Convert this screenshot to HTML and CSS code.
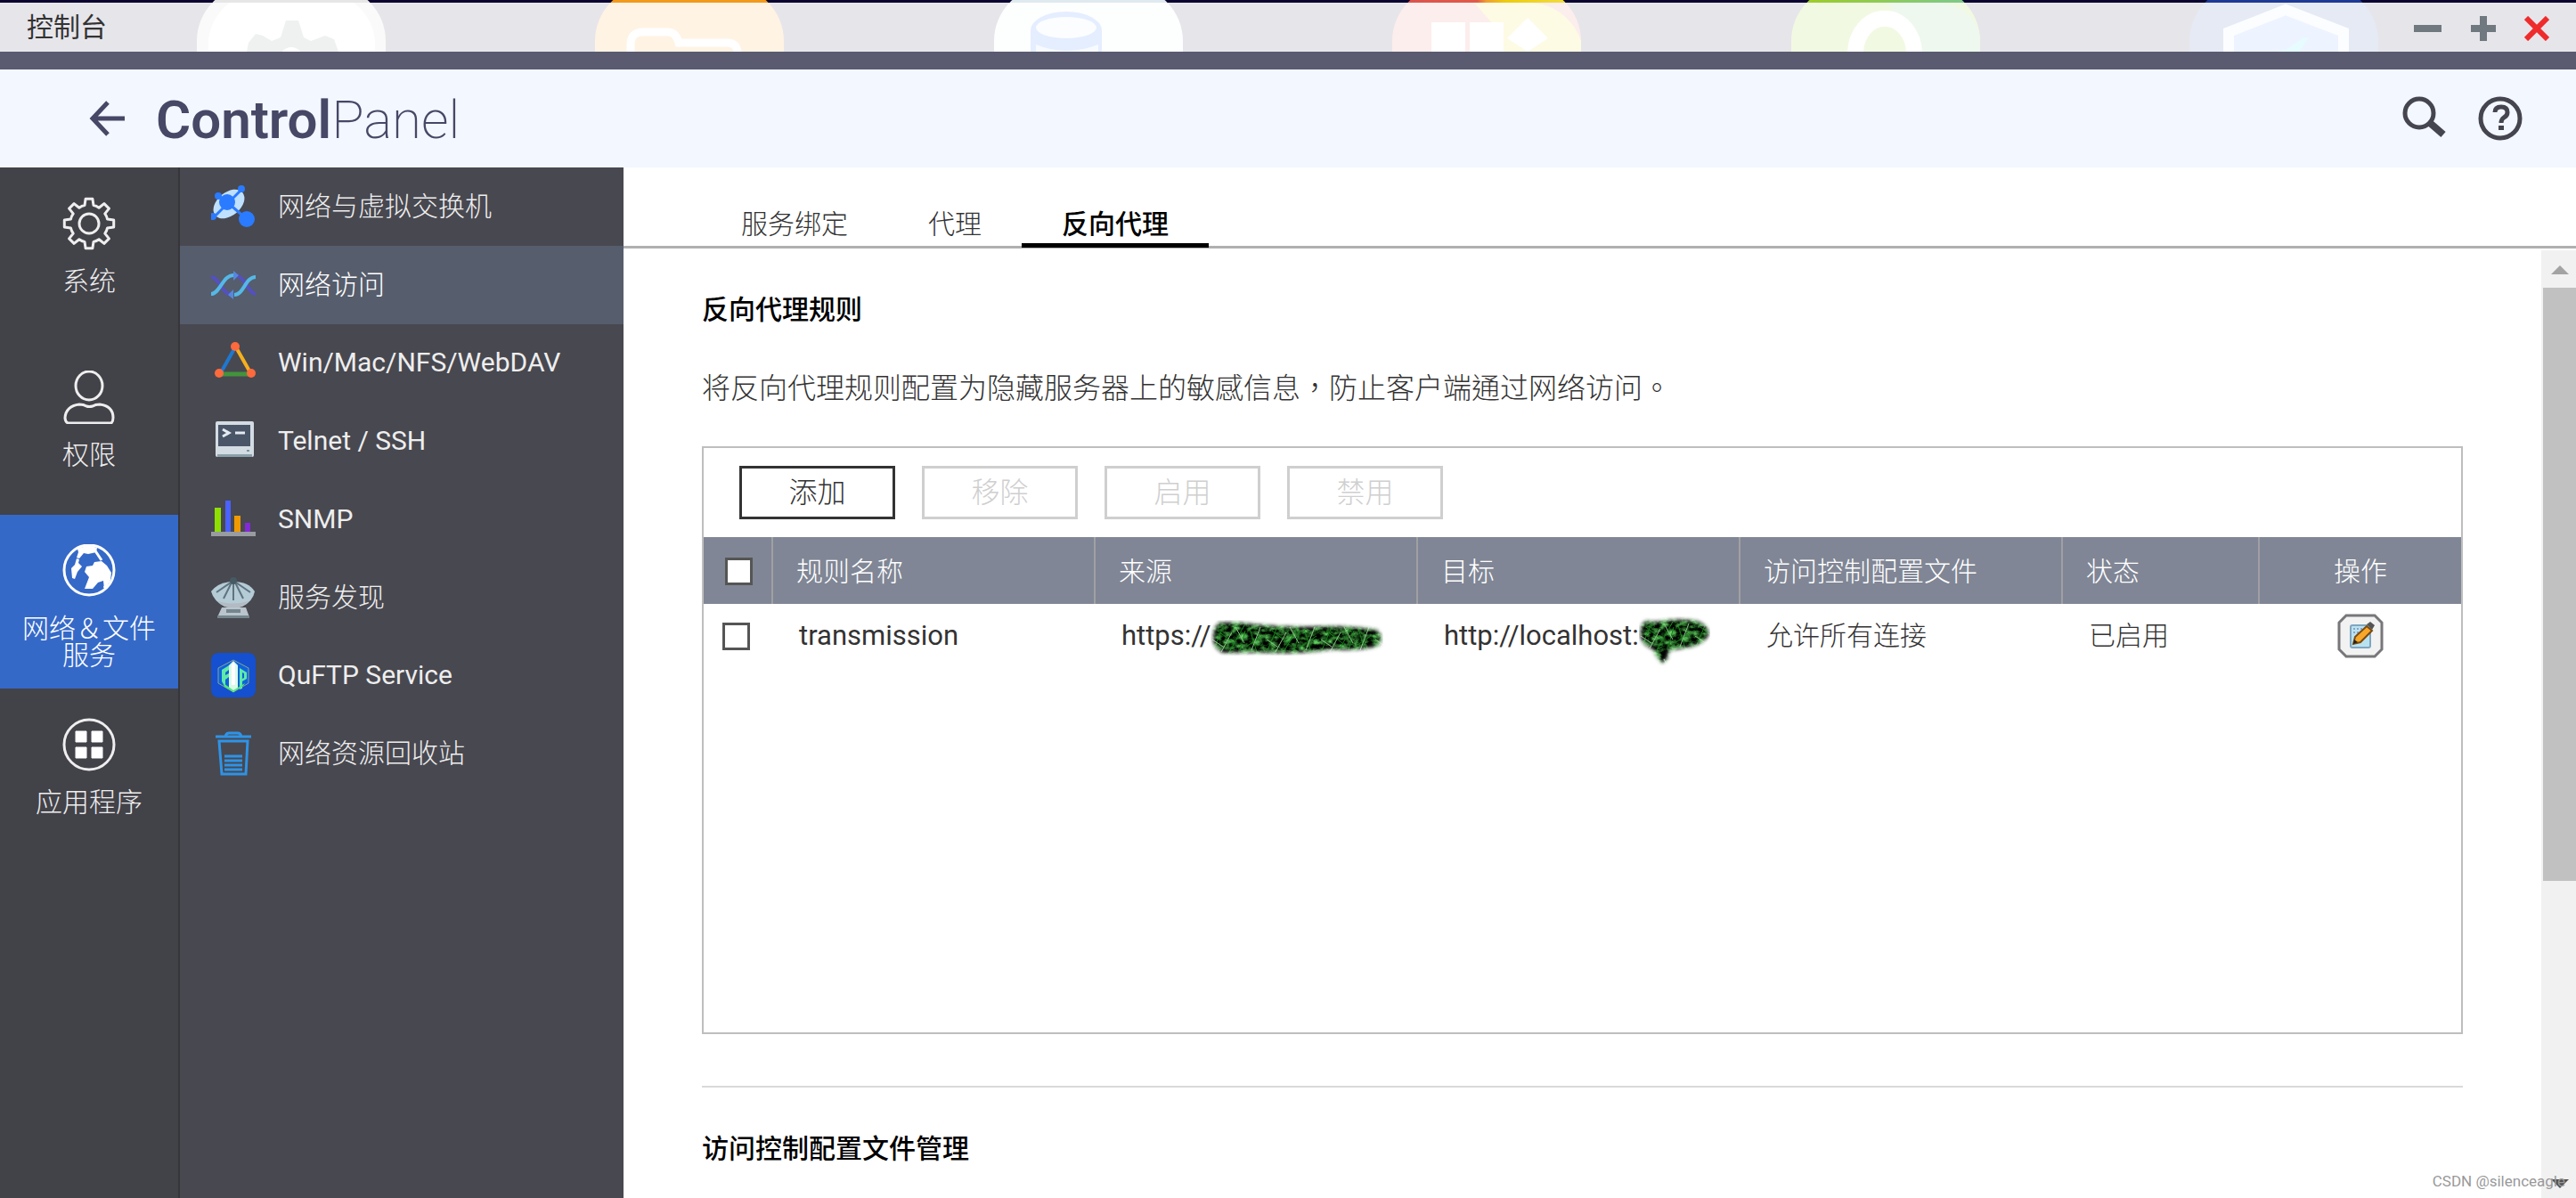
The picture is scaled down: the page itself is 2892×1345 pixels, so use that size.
FILE: index.html
```html
<!DOCTYPE html>
<html lang="zh-CN">
<head>
	<meta charset="UTF-8">
	<meta name="viewport" content="width=device-width, initial-scale=1">
	<title>控制台</title>
	<link rel="stylesheet" href="styles.css">
</head>
<body>
	<header class="titlebar">
		<!-- Desktop shortcuts that shine through the translucent title bar -->
		<svg class="desktop" width="2892" height="58" viewBox="0 0 2892 58" aria-hidden="true">
			<defs>
				<linearGradient id="appCenter"><stop offset="0" stop-color="#d9534f"/><stop offset=".45" stop-color="#e05a4a"/><stop offset=".5" stop-color="#f0a030"/><stop offset=".6" stop-color="#eccb10"/><stop offset="1" stop-color="#f3e04a"/></linearGradient>
				<linearGradient id="help"><stop offset="0" stop-color="#a0cc20"/><stop offset="1" stop-color="#7ac896"/></linearGradient>
			</defs>
			<rect width="2892" height="3" fill="#0b0430"/>
			<g>
				<rect x="221" y="-16" width="212" height="212" rx="62" fill="#e6e6e6"/>
				<rect x="668" y="-16" width="212" height="212" rx="62" fill="#f29a1c"/>
				<rect x="1116" y="-16" width="212" height="212" rx="62" fill="#dfeaf0"/>
				<rect x="1563" y="-16" width="212" height="212" rx="62" fill="url(#appCenter)"/>
				<rect x="2011" y="-16" width="212" height="212" rx="62" fill="url(#help)"/>
				<rect x="2458" y="-16" width="212" height="212" rx="62" fill="#1f3a94"/>
			</g>
			<rect y="3" width="2892" height="55" fill="#e6e5ea"/>
			<clipPath id="bar"><rect y="3" width="2892" height="55"/></clipPath>
			<g clip-path="url(#bar)">
				<rect x="221" y="-16" width="212" height="212" rx="62" fill="#fafafa"/>
				<rect x="234" y="-8" width="187" height="200" rx="58" fill="#fff"/>
				<path d="M277 58l2-10 8-10 8 2 10 6 10-4 6-19h14l6 19 8 4 16-6 10 4 5 14z" fill="#eff1f1"/>
				<circle cx="327" cy="66" r="13" fill="#fff"/>
				<rect x="668" y="-16" width="212" height="212" rx="62" fill="#fff3e4"/>
				<path d="M708 70V50q0-14 14-14h28q9 0 12 12h54q12 0 12 12" fill="none" stroke="#fff" stroke-width="9"/>
				<rect x="1116" y="-16" width="212" height="212" rx="62" fill="#fdfefe"/>
				<path d="M1157 58V34a40 21 0 0 1 80 0v24z" fill="#e5eeff"/>
				<ellipse cx="1197" cy="31" rx="34" ry="12" fill="#fbfdff"/>
				<path d="M1163 50q34 14 70 0v8h-70z" fill="#f7faff"/>
				<rect x="1563" y="-16" width="212" height="212" rx="62" fill="#fceeed"/>
				<path d="M1655 3h58a62 62 0 0 1 62 43v12h-100V26z" fill="#fdfbe4"/>
				<path d="M1607 25h38v33h-38zM1650 25h38v33h-38zM1715 20l23 23-23 15-23-15z" fill="#fff"/>
				<rect x="2011" y="-16" width="212" height="212" rx="62" fill="#f2f9e2"/>
				<path d="M2120 3h60q40 8 43 40v15h-70z" fill="#eef8ee"/>
				<path d="M2083 60a32 38 0 0 1 66 0" fill="none" stroke="#fff" stroke-width="18"/>
				<rect x="2458" y="-16" width="212" height="212" rx="62" fill="#e6eaf4"/>
				<path d="M2502 70V36l64-25 65 25v34" fill="#edf3ff" stroke="#fcfdff" stroke-width="12"/>
				<path d="M2556 58l10-2 20-14 6 0-10 16z" fill="#e6fcfe"/>
			</g>
		</svg>
		<span class="titlebar-name">控制台</span>
		<div class="window-buttons">
			<button type="button" aria-label="最小化"><svg width="32" height="32" viewBox="0 0 32 32"><path d="M0 16h31" stroke="#707880" stroke-width="8"/></svg></button>
			<button type="button" aria-label="最大化"><svg width="28" height="28" viewBox="0 0 28 28"><path d="M0 14h28M14 0v28" stroke="#707880" stroke-width="8"/></svg></button>
			<button type="button" aria-label="关闭"><svg width="28" height="28" viewBox="0 0 28 28"><path d="M2 2l24 24M26 2L2 26" stroke="#ef2b2b" stroke-width="6"/></svg></button>
		</div>
	</header>

	<div class="topbar">
		<button type="button" class="back" aria-label="返回"><svg width="40" height="40" viewBox="0 0 40 40"><path d="M40 20H4M21 2L4 20l17 18" fill="none" stroke="#474766" stroke-width="5"/></svg></button>
		<h1><b>Control</b>Panel</h1>
		<button type="button" aria-label="搜索"><svg width="50" height="50" viewBox="0 0 50 50"><circle cx="19" cy="19" r="16" fill="none" stroke="#45454f" stroke-width="5"/><path d="M31 30l15 13" stroke="#45454f" stroke-width="8"/></svg></button>
		<button type="button" aria-label="帮助"><svg width="50" height="50" viewBox="0 0 50 50"><circle cx="25" cy="25" r="22" fill="none" stroke="#45454f" stroke-width="5"/><path d="M19 18q0-6 7-6t7 6q0 4-4 6-3 2-3 6" fill="none" stroke="#45454f" stroke-width="5"/><path d="M23 33h6v5h-6z" fill="#45454f"/></svg></button>
	</div>

	<div class="layout">
		<nav class="categories">
			<a href="#system">
				<svg width="60" height="60" viewBox="0 0 60 60" fill="none" stroke="#eee" stroke-width="3" stroke-linejoin="round"><path d="M26.1 2.3h7.8L35 9.500Q38 10 41.100 12.200L46.900 7.600 52.400 13.100 47.800 18.900Q50 22 50.500 25L57.700 26.100v7.800L50.500 35Q50 38 47.800 41.100L52.400 46.900 46.900 52.400 41.100 47.800Q38 50 35 50.500L33.900 57.700h-7.800L25 50.500Q22 50 18.900 47.800L13.100 52.400 7.600 46.900 12.200 41.100Q10 38 9.500 35L2.300 33.900v-7.800L9.500 25Q10 22 12.200 18.900L7.600 13.100 13.100 7.600 18.900 12.200Q22 10 25 9.500z"/><circle cx="30" cy="30" r="11"/></svg>
				<span>系统</span>
			</a>
			<a href="#privilege">
				<svg width="60" height="60" viewBox="0 0 60 60" fill="none" stroke="#eee" stroke-width="3"><ellipse cx="30" cy="17" rx="15" ry="16"/><path d="M19 38q5 0 8 2 3 1 7 0 3-2 8-2 15 2 15 15 0 4-2 6H6q-3-2-3-6 1-13 16-15z"/></svg>
				<span>权限</span>
			</a>
			<a href="#network" class="active">
				<svg width="60" height="60" viewBox="0 0 60 60"><circle cx="30" cy="29" r="28" fill="none" stroke="#fff" stroke-width="3"/><path d="M17 5l13-4 9 3-1 5-9 2-5-1-5 6-3-1 2-6zM16 16l3 1-1 4 4 4-5 6-3 8-3-1-1-11 4-4z" fill="#fff"/><path d="M36 6l8 12" stroke="#fff" stroke-width="3"/><path d="M36 20l8-1 6 5 5 8-1 8-3 2-4 8-1-9-6 2-6 7-9 0 5-13-5-6 2-6 7-1z" fill="#fff"/><path d="M53 40l-6 9" stroke="#fff" stroke-width="3"/></svg>
				<span>网络＆文件服务</span>
			</a>
			<a href="#apps">
				<svg width="60" height="60" viewBox="0 0 60 60"><circle cx="30" cy="30" r="28" fill="none" stroke="#eee" stroke-width="3"/><path d="M15 15h12v12H15zM33 15h12v12H33zM15 33h12v12H15zM33 33h12v12H33z" fill="#fff" stroke="#fff" stroke-linejoin="round"/></svg>
				<span>应用程序</span>
			</a>
		</nav>

		<nav class="services">
			<div class="service-list">
				<a href="#switch">
					<svg width="50" height="50" viewBox="0 0 50 50"><ellipse cx="20" cy="22" rx="13" ry="20" transform="rotate(50 20 22)" fill="#bfe0ff"/><circle cx="18" cy="20" r="9" fill="#2a7bff"/><path d="M2 38l32-32M18 20l22 19" stroke="#2a7bff" stroke-width="3"/><circle cx="40" cy="39" r="9" fill="#2a7bff"/><circle cx="34" cy="5" r="4" fill="#2a7bff"/><circle cx="8" cy="13" r="4" fill="#2a7bff"/><circle cx="2" cy="36" r="4" fill="#2a7bff"/></svg>
					<span>网络与虚拟交换机</span>
				</a>
				<a href="#access" class="active">
					<svg width="50" height="50" viewBox="0 0 50 50" fill="none" stroke-width="4"><path d="M0 16C9 16 12 36 24 36M26 14C38 14 42 35 50 35" stroke="#5450c0"/><path d="M0 35C10 35 13 14 25 14M26 36C37 36 38 16 50 16" stroke="#55b8e6"/><path d="M25 9l6 5-6 6zM25 41l-6-5 6-6z" fill="#5588dd"/></svg>
					<span>网络访问</span>
				</a>
				<a href="#winmac">
					<svg width="50" height="50" viewBox="0 0 50 50" stroke-width="4"><path d="M27 8L10 38" stroke="#1e78d0"/><path d="M28 8l17 30" stroke="#f5b01e"/><path d="M10 38h35" stroke="#43933c" stroke-width="5"/><g fill="#ff6a3d"><circle cx="27" cy="7" r="5"/><circle cx="9" cy="37" r="5"/><circle cx="45" cy="37" r="5"/></g></svg>
					<span class="latin">Win/Mac/NFS/WebDAV</span>
				</a>
				<a href="#ssh">
					<svg width="50" height="50" viewBox="0 0 50 50"><rect x="5" y="3" width="43" height="40" rx="2" fill="#d3dce3"/><path d="M7 40h39v3H7z" fill="#8aa0aa"/><path d="M8 7h36v24H8z" fill="#4a5568"/><path d="M13 12l7 4-7 4M27 16h11" fill="none" stroke="#e3eaf0" stroke-width="3"/><path d="M40 35h3v2h-3z" fill="#7d93a0"/></svg>
					<span class="latin">Telnet / SSH</span>
				</a>
				<a href="#snmp">
					<svg width="50" height="50" viewBox="0 0 50 50"><path d="M0 39h50v5H0z" fill="#989ba0"/><path d="M4 12h7v27H4z" fill="#8ee000"/><path d="M16 4h6v35h-6z" fill="#4a62ff"/><path d="M26 21h7v18h-7z" fill="#f09a00"/><path d="M38 29h6v10h-6z" fill="#8429d8"/></svg>
					<span class="latin">SNMP</span>
				</a>
				<a href="#discovery">
					<svg width="50" height="50" viewBox="0 0 50 50"><path d="M12 36h27l4 11H7z" fill="#b9c4cc"/><path d="M7 45h36v3H7zM17 38h16v4H17z" fill="#75858e"/><path d="M25 7q17 0 24 11-2 11-14 17-10 3-20 0Q3 29 0 18 8 7 25 7z" fill="#b5cbd5"/><path d="M8 29q16 5 34 0-6 6-12 7H20q-8-2-12-7z" fill="#b3bac2"/><path d="M25 7v21M23 8l-9 18M27 8l9 18M22 8L6 19M28 8l16 11" stroke="#5e7480" stroke-width="2"/><circle cx="25" cy="6" r="4" fill="#455a62"/></svg>
					<span>服务发现</span>
				</a>
				<a href="#quftp">
					<svg width="50" height="50" viewBox="0 0 50 50"><rect width="50" height="50" rx="8" fill="#1450cf"/><path d="M25 8l17 9v17l-17 10L8 34V17z" fill="#0d62dc" stroke="#8aa58a"/><path d="M12 32V19l8-5v5l-4 3v3l4-2v4l-4 3v9zM32 41V17l8 5v7l-5 3v8z" fill="#5fe9a8"/><path d="M35 22l2 1v5l-2 1z" fill="#0d62dc"/><path d="M20 40V14l5-5 5 5v26l-5 4z" fill="#d8fbe8"/><path d="M23 36V14l2-4 2 4v22z" fill="#fff"/><path d="M14 34l11 8 13-8-2 3-11 7-10-6z" fill="#4fe97a"/></svg>
					<span class="latin">QuFTP Service</span>
				</a>
				<a href="#recycle">
					<svg width="50" height="50" viewBox="0 0 50 50" fill="none" stroke="#2f93e6" stroke-width="3"><path d="M5 6h40M16 6q1-4 4-4h10q3 0 4 4M9 11h32l-2 37H12zM15 28h20M15 33h20M15 38h20M15 43h20"/></svg>
					<span>网络资源回收站</span>
				</a>
			</div>
		</nav>

		<main>
			<div class="tabs" role="tablist">
				<button type="button" role="tab">服务绑定</button>
				<button type="button" role="tab">代理</button>
				<button type="button" role="tab" class="active" aria-selected="true">反向代理</button>
			</div>

			<div class="panel">
				<div class="content">
					<h2>反向代理规则</h2>
					<p lang="zh-TW">将反向代理规则配置为隐藏服务器上的敏感信息，防止客户端通过网络访问。</p>

					<section class="rules">
						<div class="toolbar">
							<button type="button">添加</button>
							<button type="button" disabled>移除</button>
							<button type="button" disabled>启用</button>
							<button type="button" disabled>禁用</button>
						</div>
						<table>
							<colgroup>
								<col class="col-check"><col class="col-wide"><col class="col-wide"><col class="col-wide"><col class="col-wide"><col class="col-state"><col>
							</colgroup>
							<thead>
								<tr>
									<th class="check"><input type="checkbox" aria-label="全选"></th>
									<th>规则名称</th>
									<th>来源</th>
									<th>目标</th>
									<th>访问控制配置文件</th>
									<th>状态</th>
									<th class="action">操作</th>
								</tr>
							</thead>
							<tbody>
								<tr>
									<td class="check"><input type="checkbox" aria-label="transmission"></td>
									<td>transmission</td>
									<td><span class="masked">https://<svg width="194" height="44" viewBox="0 -4 194 44" aria-hidden="true">
										<defs>
											<!-- Grass brush: dark green noise with a few bright blades -->
											<filter id="grass" x="0" y="0" width="1" height="1" color-interpolation-filters="sRGB">
												<feTurbulence type="fractalNoise" baseFrequency=".12 .18" numOctaves="4" seed="4"/>
												<feColorMatrix values=".8 0 0 0 -.300  1.6 0 0 0 -.520  .8 0 0 0 -.300  0 0 0 0 1"/>
											</filter>
											<pattern id="blades" width="61" height="40" patternUnits="userSpaceOnUse">
												<path d="M3 34L14 8M20 38L38 6M33 34l6-22M52 36L44 10M8 12l18 14M40 30l18-12" stroke="#128216"/>
												<path d="M12 36L24 14M28 8l10 18M46 34l10-26M2 22l12 8" stroke="#8fbf8a"/>
											</pattern>
											<filter id="soft"><feGaussianBlur stdDeviation="2"/></filter>
											<mask id="smear"><path d="M10 3q20-1 40 2 40 4 80 2 30 0 56 4 10 8 2 18-20 6-52 4-30 5-64 4-30-1-58 0Q2 30 3 20q0-12 7-17z" fill="#fff" filter="url(#soft)"/></mask>
											<mask id="blot"><path d="M8 5q10 2 18 0 20-3 38 0 16 6 14 16-6 12-30 15l-14 2q-2 14-9 14-6-8-9-15Q0 30 2 18q0-10 6-13z" fill="#fff" filter="url(#soft)"/></mask>
										</defs>
										<g mask="url(#smear)"><rect width="194" height="40" filter="url(#grass)"/><rect width="194" height="40" fill="url(#blades)"/></g>
									</svg></span></td>
									<td><span class="masked">http://localhost:<svg width="80" height="68" viewBox="0 -12 80 68" aria-hidden="true"><g mask="url(#blot)"><rect width="80" height="56" filter="url(#grass)"/><rect width="80" height="56" fill="url(#blades)"/></g></svg></span></td>
									<td>允许所有连接</td>
									<td>已启用</td>
									<td class="action"><button type="button" class="edit" aria-label="编辑"><svg width="52" height="50" viewBox="0 0 52 50"><path d="M10 2h32l8 8v30l-8 8H10l-8-8V10z" fill="#f2f2f2" stroke="#77777a" stroke-width="3"/><rect x="15" y="13" width="22" height="25" rx="2" fill="#b9e2f0" stroke="#7fa6c0" stroke-width="2"/><path d="M18 17h10M18 21h7" stroke="#8ba2c8" stroke-width="2" stroke-dasharray="2 2"/><path d="M18 34l2-8 13-12 6 5-13 13z" fill="#f7a82a" stroke="#7a4a10" stroke-width="2"/><path d="M33 12l4-3 5 4-3 5z" fill="#555"/><path d="M18 34l1-5 4 3z" fill="#222"/></svg></button></td>
								</tr>
							</tbody>
						</table>
					</section>

					<h2>访问控制配置文件管理</h2>
				</div>

				<div class="scrollbar" aria-hidden="true">
					<svg width="20" height="10" viewBox="0 0 20 10"><path d="M0 10L10 0l10 10z" fill="#a3a3a3"/></svg>
					<div class="thumb"></div>
					<svg width="20" height="10" viewBox="0 0 20 10"><path d="M0 0h20L10 10z" fill="#505050"/></svg>
				</div>
			</div>
		</main>
	</div>
	<div class="watermark">CSDN @silenceagle</div>
</body>
</html>
```

FILE: styles.css
```css
* {
	box-sizing: border-box;
}

html,
body {
	height: 100%;
	margin: 0;
}

body {
	display: flex;
	flex-direction: column;
	overflow: hidden;
	background: #fff;
	color: #333;
	font-family: Roboto, "Noto Sans CJK SC", sans-serif;
	font-size: 30px;
	font-weight: 300;
	line-height: 30px;
}

button {
	padding: 0;
	border: 0;
	background: none;
	color: inherit;
	font: inherit;
}

a {
	color: inherit;
	text-decoration: none;
}

svg {
	display: block;
	flex: none;
}

/* Window title bar */
.titlebar {
	position: relative;
	display: flex;
	align-items: center;
	justify-content: space-between;
	height: 78px;
	padding: 4px 30px 0;
	background: #e6e5ea;
	border-bottom: 20px solid #5a5b70;
	flex: none;
}

.desktop {
	position: absolute;
	top: 0;
	left: 0;
}

.titlebar-name {
	position: relative;
	font-weight: 400;
}

.window-buttons {
	position: relative;
	display: flex;
	align-items: center;
	gap: 32px;
	padding-top: 2px;
}

/* App header */
.topbar {
	display: flex;
	align-items: center;
	gap: 35px;
	height: 110px;
	padding: 0 60px 0 100px;
	background: #f3f7ff;
	color: #474766;
	flex: none;
}

.topbar h1 {
	flex: 1;
	margin: 0;
	padding-top: 4px;
	font-size: 60px;
	font-weight: 200;
	line-height: 72px;
}

.topbar h1 b {
	font-weight: 600;
}

.layout {
	display: flex;
	flex: 1;
	min-height: 0;
}

/* Left column */
.categories {
	width: 202px;
	flex: none;
	background: #424249;
	border-right: 2px solid #36363a;
	color: #eee;
	text-align: center;
}

.categories a {
	display: flex;
	flex-direction: column;
	align-items: center;
	gap: 20px;
	height: 195px;
	padding: 33px 20px 0;
}

.categories .active {
	background: #3569c8;
	color: #fff;
}

.services {
	width: 498px;
	flex: none;
	background: #484850;
	color: #eee;
}

.service-list {
	display: flex;
	flex-direction: column;
	height: 702px;
}

.services a {
	display: flex;
	flex: 1;
	align-items: center;
	gap: 25px;
	padding-left: 35px;
}

.services .active {
	background: #565d6c;
	color: #fff;
}

.services .latin {
	font-weight: 400;
}

/* Right side */
main {
	display: flex;
	flex: 1;
	flex-direction: column;
	min-width: 0;
}

.tabs {
	display: flex;
	height: 91px;
	padding: 36px 0 0 87px;
	border-bottom: 3px solid #b0b0b0;
	flex: none;
}

.tabs button {
	height: 54px;
	padding: 6px 45px 0;
	border-bottom: 5px solid transparent;
}

.tabs .active {
	border-color: #000;
	color: #000;
	font-weight: 500;
}

.panel {
	display: flex;
	flex: 1;
	min-height: 0;
	padding-top: 2px;
}

.content {
	flex: 1;
	min-width: 0;
	padding: 52px 88px 0;
	overflow: hidden;
}

h2 {
	margin: 0;
	color: #000;
	font-size: 30px;
	font-weight: 500;
	line-height: 30px;
}

.content p {
	margin: 56px 0 48px;
	font-family: Roboto, "Noto Sans CJK TC", sans-serif;
	font-size: 32px;
	line-height: 34px;
}

.rules {
	height: 660px;
	margin-bottom: 58px;
	border: 2px solid #bebebe;
}

.rules + h2 {
	padding-top: 54px;
	border-top: 2px solid #d9d9d9;
}

.toolbar {
	display: flex;
	gap: 30px;
	padding: 20px 40px;
}

.toolbar button {
	width: 175px;
	height: 60px;
	border: 3px solid #333;
	font-size: 32px;
}

.toolbar button:disabled {
	border-color: #cfcfcf;
	color: #cfcfcf;
}

table {
	width: 100%;
	border-collapse: collapse;
	table-layout: fixed;
}

.col-check {
	width: 77px;
}

.col-wide {
	width: 362px;
}

.col-state {
	width: 221px;
}

th,
td {
	height: 75px;
	padding: 2px 0 0 26px;
	text-align: left;
	font-weight: 300;
}

th {
	background: #808695;
	color: #fff;
	border-right: 2px solid #a0a0a4;
}

th:last-child {
	border-right: 0;
}

td {
	height: 72px;
	padding: 0 0 0 30px;
	font-size: 31px;
	font-weight: 400;
}

td:nth-child(n+5) {
	font-size: 30px;
	font-weight: 300;
}

.check {
	padding-left: 24px;
}

td.check {
	padding-left: 21px;
}

.action,
td.action {
	padding-left: 0;
	text-align: center;
}

.edit {
	display: inline-block;
	vertical-align: middle;
}

input[type="checkbox"] {
	display: block;
	width: 31px;
	height: 31px;
	margin: 0;
	appearance: none;
	background: #fff;
	border: 3px solid #555;
}

.masked {
	display: flex;
	align-items: center;
	height: 40px;
}

/* Scrollbar */
.scrollbar {
	display: flex;
	flex-direction: column;
	align-items: center;
	width: 39px;
	padding: 17px 0 11px 2px;
	background: #f1f1f1;
	flex: none;
}

.thumb {
	width: 100%;
	height: 666px;
	margin: 15px 0 auto;
	background: #c1c1c1;
}

.watermark {
	position: absolute;
	right: 12px;
	bottom: 8px;
	color: #999;
	font-size: 17px;
	line-height: 22px;
	font-weight: 400;
}
```
